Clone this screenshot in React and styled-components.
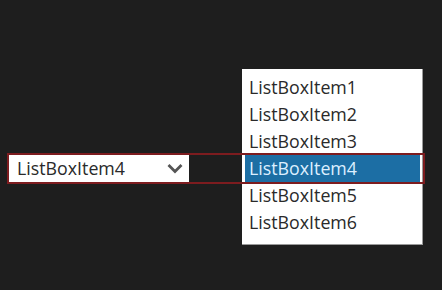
import React from 'react'
import styled, { createGlobalStyle } from 'styled-components'

const GlobalStyle = createGlobalStyle`
  html, body {
    margin: 0;
    padding: 0;
    background: #1e1e1e;
    font-family: "Open Sans", "Noto Sans", sans-serif;
  }
`

const Stage = styled.div`
  position: relative;
  width: 442px;
  height: 290px;
  background: #1e1e1e;
  display: flex;
  align-items: flex-start;
  padding: 69px 0 0 9px;
  box-sizing: border-box;
  gap: 53px;
`

const Combo = styled.div`
  margin-top: 86px;
  width: 180px;
  height: 27px;
  background: #fff;
  display: flex;
  align-items: center;
  justify-content: space-between;
  padding: 0 6px 1px 8px;
  box-sizing: border-box;
  font-size: 17.8px;
  color: #2a2a2a;
`

const Popup = styled.div`
  width: 181px;
  height: 176px;
  background: #fff;
  border-right: 1px solid #9a9a9a;
  border-bottom: 1px solid #9a9a9a;
  box-sizing: border-box;
  padding: 5px 2px 0 3px;
  display: flex;
  flex-direction: column;
`

const Item = styled.div`
  height: 27px;
  display: flex;
  align-items: center;
  padding: 0 0 1px 4px;
  box-sizing: border-box;
  font-size: 17.8px;
  color: ${p => (p.selected ? '#dcefff' : '#2a2a2a')};
  background: ${p => (p.selected ? '#1c6ea4' : 'transparent')};
`

const Highlight = styled.div`
  position: absolute;
  left: 7px;
  top: 153px;
  width: 418px;
  height: 31px;
  border: 2px solid #7d1c1f;
  box-sizing: border-box;
  pointer-events: none;
`

const Chevron = () => (
  <svg width="16" height="11" viewBox="0 0 16 11">
    <path d="M1.5 2 L8 8.5 L14.5 2" fill="none" stroke="#555" strokeWidth="2.8" />
  </svg>
)

const items = [1, 2, 3, 4, 5, 6]

export default function App() {
  return (
    <>
      <GlobalStyle />
      <Stage>
        <Combo>
          <span>ListBoxItem4</span>
          <Chevron />
        </Combo>
        <Popup>
          {items.map(n => (
            <Item key={n} selected={n === 4}>ListBoxItem{n}</Item>
          ))}
        </Popup>
        <Highlight />
      </Stage>
    </>
  )
}
